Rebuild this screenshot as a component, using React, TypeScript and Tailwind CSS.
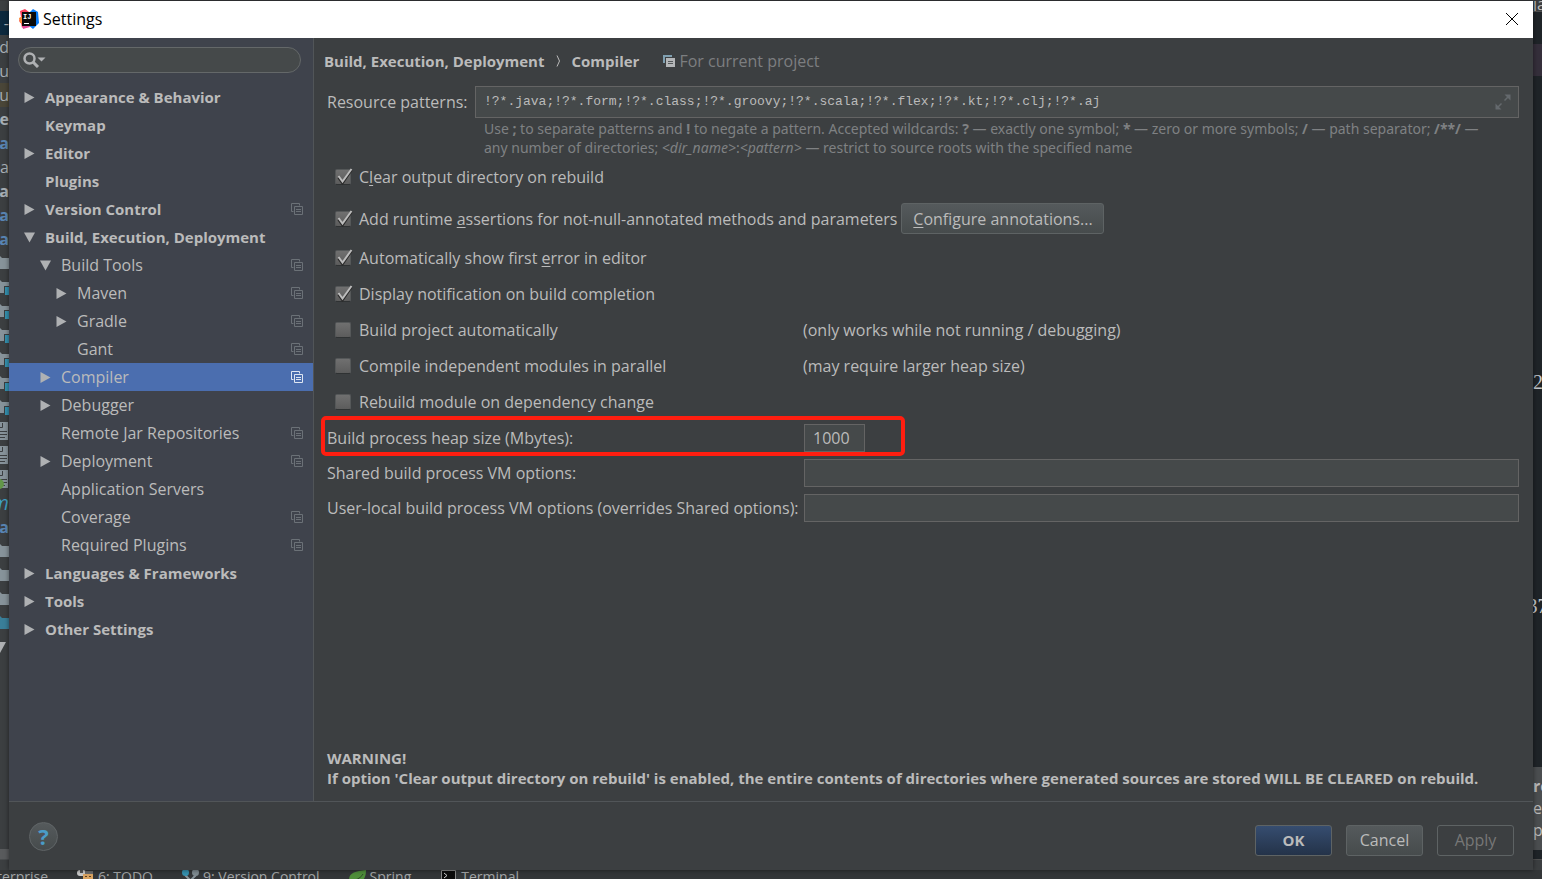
import { useState } from "react";
import type { ReactNode } from "react";

type TreeItem = {
  label: string;
  level: 0 | 1 | 2;
  arrow?: "right" | "down";
  project?: boolean;
};

const TREE: TreeItem[] = [
  { label: "Appearance & Behavior", level: 0, arrow: "right" },
  { label: "Keymap", level: 0 },
  { label: "Editor", level: 0, arrow: "right" },
  { label: "Plugins", level: 0 },
  { label: "Version Control", level: 0, arrow: "right", project: true },
  { label: "Build, Execution, Deployment", level: 0, arrow: "down" },
  { label: "Build Tools", level: 1, arrow: "down", project: true },
  { label: "Maven", level: 2, arrow: "right", project: true },
  { label: "Gradle", level: 2, arrow: "right", project: true },
  { label: "Gant", level: 2, project: true },
  { label: "Compiler", level: 1, arrow: "right", project: true },
  { label: "Debugger", level: 1, arrow: "right" },
  { label: "Remote Jar Repositories", level: 1, project: true },
  { label: "Deployment", level: 1, arrow: "right", project: true },
  { label: "Application Servers", level: 1 },
  { label: "Coverage", level: 1, project: true },
  { label: "Required Plugins", level: 1, project: true },
  { label: "Languages & Frameworks", level: 0, arrow: "right" },
  { label: "Tools", level: 0, arrow: "right" },
  { label: "Other Settings", level: 0, arrow: "right" },
];

const INDENT = ["pl-[15px]", "pl-[31px]", "pl-[47px]"];

function Arrow({ dir }: { dir?: "right" | "down" }) {
  return (
    <svg viewBox="0 0 11 11" className="h-[11px] w-[11px] shrink-0 fill-[#afb1b3]" aria-hidden="true">
      {dir === "right" && <path d="M0.5 0L10.5 5.5L0.5 11Z" />}
      {dir === "down" && <path d="M0 0.5H11L5.5 10.5Z" />}
    </svg>
  );
}

function ProjectIcon({ active }: { active?: boolean }) {
  return (
    <svg
      viewBox="0 0 12 12"
      fill="none"
      className={active ? "h-3 w-3 text-[#dfe6f2]" : "h-3 w-3 text-[#6b7177]"}
      stroke="currentColor"
      aria-hidden="true"
    >
      <path d="M2.5 8.5H0.5V0.5H8.5V2.5" />
      <path d="M3.5 3.5H11.5V11.5H3.5ZM5 6.5H10M5 8.5H10" />
    </svg>
  );
}

function ProjectSolidIcon() {
  return (
    <svg viewBox="0 0 12 12" className="h-3 w-3 shrink-0" aria-hidden="true">
      <path d="M0 0H9V2H2V8H0Z" fill="#7f9fb0" />
      <path d="M2 2H3V9H2Z" fill="#3c3f41" />
      <path d="M3 3H12V12H3Z" fill="#b4b6b8" />
      <path d="M5 6.5H10M5 8.5H10" stroke="#54585a" />
    </svg>
  );
}

function AppLogo() {
  return (
    <svg viewBox="0 0 20 20" className="h-5 w-5" aria-hidden="true">
      <path d="M1 2L6 0L10 3L6 16L3 19L2 14L0 12L2 8Z" fill="#f83f5e" />
      <path d="M0 9L4 7L5 15L1 14Z" fill="#fc8a3a" />
      <path d="M10 4L14 0L19 3L20 14L14 20L9 16Z" fill="#087cfa" />
      <path d="M3 15L10 15L11 18L4 20Z" fill="#e14b9b" />
      <rect x="3" y="3" width="14" height="14" fill="#0b0b0b" />
      <text x="4" y="10" fontSize="7" fontWeight="700" fill="#fff" fontFamily="Liberation Mono, monospace">IJ</text>
      <rect x="5" y="14" width="5" height="1" fill="#fff" />
    </svg>
  );
}

function Check({ id, checked: initial, children }: { id: string; checked?: boolean; children: ReactNode }) {
  const [checked, setChecked] = useState(!!initial);
  return (
    <span className="flex items-center gap-2 pl-2">
      <span className="relative flex h-4 w-4">
        <input
          id={id}
          type="checkbox"
          checked={checked}
          onChange={() => setChecked(!checked)}
          className="h-4 w-4 appearance-none rounded-xs border border-[#555859] border-b-[#2f3233] bg-linear-to-b from-[#707070] to-[#5c5c5c]"
        />
        {checked && (
          <svg viewBox="0 0 18 18" className="pointer-events-none absolute -top-px left-0 h-[18px] w-[18px]" fill="none" aria-hidden="true">
            <path d="M3.5 9.5L7.5 15L16.5 2" stroke="#2b2b2b" strokeWidth="2.5" />
            <path d="M3.5 8L7.5 13.5L16.5 1" stroke="#bcbcbc" strokeWidth="2" />
          </svg>
        )}
      </span>
      <label htmlFor={id}>{children}</label>
    </span>
  );
}

const FIELD = "border border-[#646464] bg-[#45494a] text-[#bbbbbb] outline-none";
const BUTTON = "h-[31px] rounded-[3px] border border-[#5e6364]";

function Folder({ fill, badge }: { fill: string; badge?: boolean }) {
  return (
    <svg viewBox="0 0 9 24" className="h-6 w-[9px]" aria-hidden="true">
      <path d="M0 5L2 7H9V18H0Z" fill={fill} />
      {badge && <path d="M4 11H9V20H4Z" fill="#3c3f41" />}
      {badge && <path d="M5 12H9V20H5Z" fill="#3592b0" />}
    </svg>
  );
}

function FileGlyph({ dot }: { dot?: boolean }) {
  return (
    <svg viewBox="0 0 9 24" className="h-6 w-[9px]" aria-hidden="true">
      <path d="M0 3H8V21H0Z" fill="#87939a" />
      <path d="M0 8.5H2.5V4M0 12.5H7M0 15.5H7M0 18.5H5" stroke="#3c3f41" fill="none" />
      {dot && <circle cx="-1" cy="17" r="5" fill="#629749" />}
    </svg>
  );
}

function Stub({ children, className }: { children: ReactNode; className: string }) {
  return <div className={`flex h-6 items-center justify-end overflow-hidden whitespace-nowrap ${className}`}>{children}</div>;
}

function LeftStrip() {
  return (
    <div className="flex flex-col overflow-hidden pt-[10px] text-[16px] leading-6 text-[#a9b0b5]" aria-hidden="true">
      <Stub className="bg-[#0d293e]">-</Stub>
      <Stub className="">d</Stub>
      <Stub className="">ou</Stub>
      <Stub className="bg-[#4a4638]">ou</Stub>
      <Stub className="font-bold">e</Stub>
      <Stub className="font-bold text-[#5a86b4]">ta</Stub>
      <Stub className="">a</Stub>
      <Stub className="font-bold">ta</Stub>
      <Stub className="font-bold text-[#5a86b4]">ta</Stub>
      <Stub className="font-bold text-[#5a86b4]">ta</Stub>
      <Folder fill="#87939a" />
      {[0, 1, 2, 3, 4, 5].map((n) => (
        <Folder key={n} fill="#87939a" badge />
      ))}
      <FileGlyph />
      <FileGlyph />
      <FileGlyph dot />
      <Stub className="text-[20px] text-[#3f9fc4] italic">m</Stub>
      <Stub className="font-bold text-[#5a86b4]">ta</Stub>
      <Folder fill="#87939a" />
      <Folder fill="#87939a" />
      <Folder fill="#87939a" />
      <Folder fill="#3a7f99" />
      <svg viewBox="0 0 9 24" className="h-6 w-[9px]">
        <path d="M-6 7H6L0 18Z" fill="#afb1b3" />
      </svg>
      <div className="mt-auto h-[11px] border-b border-[#4a4d4f] bg-[#595b5d]" />
      <div className="h-[10px] shrink-0" />
    </div>
  );
}

function RightStrip() {
  return (
    <div className="flex flex-col overflow-hidden bg-[#1f2428] whitespace-nowrap" aria-hidden="true">
      <div className="h-[11px] shrink-0 overflow-hidden border-b border-[#505050] bg-[#3c3f41] text-[16px] leading-[6px] text-[#bbbbbb]">ja</div>
      <div className="h-8 shrink-0" />
      <div className="h-8 shrink-0 bg-[#352f3b]" />
      <div className="flex grow flex-col pt-[294px] font-['Liberation_Serif',serif] text-[20px] leading-6 text-[#c3c9ce]">
        <span className="h-6">2</span>
        <span className="mt-[200px] flex h-6 w-[9px] justify-center">37</span>
      </div>
      <div className="flex h-[83px] shrink-0 flex-col bg-[#4b4e50] pt-2 text-[16px] leading-[22px] text-[#bbbbbb]">
        <b>ro</b>
        <span>e</span>
        <span>p</span>
      </div>
      <div className="h-[10px] shrink-0 border-b border-[#515151]" />
      <div className="h-[10px] shrink-0 bg-[#3c3f41]" />
    </div>
  );
}

function StatusStrip() {
  return (
    <div className="col-span-3 flex h-[9px] items-start overflow-hidden bg-[#333638] text-[14px] leading-[14px] whitespace-nowrap text-[#a4a7a9]">
      <span className="flex w-12 justify-end">Enterprise</span>
      <span className="flex gap-1 pl-[29px]">
        <svg viewBox="0 0 17 10" className="h-[10px] w-[17px]" aria-hidden="true">
          <rect x="0" y="0" width="9" height="6" rx="3" fill="#c9c9c9" />
          <path d="M3 0H6V3H3Z" fill="#555" />
          <path d="M6 4H16V10H6Z" fill="#d9a361" />
          <path d="M8 1H16V4H8Z" fill="#6b6b6b" />
          <path d="M8 6H10V7H8ZM12 6H14V7H12Z" fill="#5a4022" />
        </svg>
        6: TODO
      </span>
      <span className="flex gap-1 pl-[29px]">
        <svg viewBox="0 0 17 10" className="h-[10px] w-[17px]" aria-hidden="true">
          <path d="M3 5L8 10M14 5L9 10" stroke="#87939a" strokeWidth="2" />
          <circle cx="3.5" cy="2.5" r="3.5" fill="#3592b0" />
          <circle cx="13.5" cy="2.5" r="3.5" fill="#7f8b91" />
        </svg>
        9: Version Control
      </span>
      <span className="flex gap-1 pl-[29px]">
        <svg viewBox="0 0 17 10" className="h-[10px] w-[17px]" aria-hidden="true">
          <path d="M0 10C0 3 6 1 17 0C17 5 16 8 14 10Z" fill="#4f8f3a" />
          <path d="M6 10C10 9 13 6 14 4" stroke="#2f4a29" fill="none" />
        </svg>
        Spring
      </span>
      <span className="flex gap-1 pl-[29px]">
        <svg viewBox="0 0 17 10" className="h-[10px] w-[17px]" aria-hidden="true">
          <path d="M1.5 10V0.5H15.5V10" fill="#0c0c0c" stroke="#8a8a8a" />
          <path d="M4 3L7 5.5L4 8" stroke="#d0d0d0" fill="none" />
        </svg>
        Terminal
      </span>
    </div>
  );
}

export default function App() {
  const [selected, setSelected] = useState("Compiler");
  return (
    <div className="grid min-h-screen grid-cols-[9px_minmax(0,1fr)_9px] grid-rows-[1px_1fr_9px] bg-[#3c3f41] font-['Open_Sans','Noto_Sans',sans-serif] text-[#bbbbbb]">
      <div className="col-span-3 bg-[#37393b]" />
      <LeftStrip />
      <section className="z-10 flex flex-col bg-[#3c3f41] shadow-[0_0_5px_rgba(0,0,0,0.5)]" aria-label="Settings">
        <header className="flex h-[37px] shrink-0 items-center bg-white pr-[15px] pb-0.5 pl-[10px] text-black">
          <AppLogo />
          <h1 className="grow pl-1 text-[16px] leading-5">Settings</h1>
          <button type="button" aria-label="Close" className="h-3 w-3">
            <svg viewBox="0 0 12 12" className="h-3 w-3" stroke="#000" aria-hidden="true">
              <path d="M0 0L12 12M12 0L0 12" />
            </svg>
          </button>
        </header>

        <div className="flex grow">
          <nav className="w-[305px] shrink-0 border-r border-[#515558] bg-[#3f434c] pt-[9px]" aria-label="Settings categories">
            <label className="mr-3 ml-[9px] flex h-[26px] items-center gap-px rounded-full border border-[#646869] bg-[#45494a] pl-1">
              <svg viewBox="0 0 23 16" className="h-4 w-[23px] shrink-0" fill="none" aria-hidden="true">
                <circle cx="6.5" cy="6.5" r="5" stroke="#afb1b3" strokeWidth="2.5" />
                <path d="M10 10L15 15" stroke="#afb1b3" strokeWidth="3" />
                <path d="M14.5 5.5H22.5L18.5 9.5Z" fill="#afb1b3" />
              </svg>
              <input type="text" aria-label="Search settings" className="mr-3 min-w-0 grow bg-transparent text-[15px] outline-none" />
            </label>
            <ul className="pt-[10px]">
              {TREE.map((item) => {
                const active = item.label === selected;
                return (
                  <li key={item.label}>
                    <button
                      type="button"
                      onClick={() => setSelected(item.label)}
                      className={`flex h-7 w-full items-center gap-[10px] pr-[10px] text-left whitespace-nowrap ${INDENT[item.level]} ${active ? "bg-[#4b6eaf]" : ""}`}
                    >
                      <Arrow dir={item.arrow} />
                      <span className={item.level === 0 ? "grow text-[15px] font-bold" : "grow text-[16px]"}>{item.label}</span>
                      {item.project && <ProjectIcon active={active} />}
                    </button>
                  </li>
                );
              })}
            </ul>
          </nav>

          <main className="flex min-w-0 grow flex-col pr-[14px] pl-[13px] text-[16px] leading-5">
            <div className="-ml-[3px] flex h-[46px] items-center text-[15px] font-bold">
              <span>Build, Execution, Deployment</span>
              <svg viewBox="0 0 5 12" className="mx-[11px] h-3 w-[5px]" fill="none" stroke="#bbbbbb" aria-hidden="true">
                <path d="M1 0.5L3.5 6L1 11.5" />
              </svg>
              <h2>Compiler</h2>
              <span className="flex items-center gap-1 pl-6 text-[16px] font-normal text-[#7c7e80]">
                <ProjectSolidIcon />
                For current project
              </span>
            </div>

            <div className="mt-[2px] flex items-center">
              <label htmlFor="patterns" className="w-[148px] shrink-0">Resource patterns:</label>
              <div className={`flex h-8 min-w-0 grow items-center pr-[7px] pl-2 ${FIELD}`}>
                <input
                  id="patterns"
                  type="text"
                  defaultValue="!?*.java;!?*.form;!?*.class;!?*.groovy;!?*.scala;!?*.flex;!?*.kt;!?*.clj;!?*.aj"
                  className="min-w-0 grow bg-transparent font-['Liberation_Mono',monospace] text-[13px] outline-none"
                />
                <button type="button" aria-label="Expand field">
                  <svg viewBox="0 0 16 16" className="h-4 w-4" fill="#64696d" stroke="#64696d" strokeWidth="1.5" aria-hidden="true">
                    <path d="M9.5 6.5L13 3M2.5 13.5L6.5 9.5" />
                    <path d="M9.5 0.5H15.5V6.5ZM0.5 9.5V15.5H6.5Z" stroke="none" />
                  </svg>
                </button>
              </div>
            </div>

            <p className="mt-px pr-5 pl-[157px] font-['Noto_Sans',sans-serif] text-[14px] leading-[19px] text-[#7f8183]">
              Use <b>;</b> to separate patterns and <b>!</b> to negate a pattern. Accepted wildcards: <b>?</b> — exactly one symbol; <b>*</b> — zero
              or more symbols; <b>/</b> — path separator; <b>/**/</b> — any number of directories; <i>&lt;dir_name&gt;</i>:<i>&lt;pattern&gt;</i> —
              restrict to source roots with the specified name
            </p>

            <div className="flex h-10 items-center">
              <Check id="clear" checked>
                C<u className="underline-offset-2">l</u>ear output directory on rebuild
              </Check>
            </div>
            <div className="flex h-[43px] items-center gap-1">
              <Check id="assertions" checked>
                Add runtime <u className="underline-offset-2">a</u>ssertions for not-null-annotated methods and parameters
              </Check>
              <button type="button" className={`${BUTTON} w-[203px] bg-linear-to-b from-[#555a5c] to-[#464b4c] whitespace-nowrap`}>
                <u className="underline-offset-2">C</u>onfigure annotations...
              </button>
            </div>
            <div className="flex h-9 items-center">
              <Check id="first-error" checked>
                Automatically show first <u className="underline-offset-2">e</u>rror in editor
              </Check>
            </div>
            <div className="flex h-9 items-center">
              <Check id="notify" checked>Display notification on build completion</Check>
            </div>
            <div className="grid h-9 grid-cols-[476px_minmax(0,1fr)] items-center">
              <Check id="auto-build">Build project automatically</Check>
              <span>(only works while not running / debugging)</span>
            </div>
            <div className="grid h-9 grid-cols-[476px_minmax(0,1fr)] items-center">
              <Check id="parallel">Compile independent modules in parallel</Check>
              <span>(may require larger heap size)</span>
            </div>
            <div className="flex h-9 items-center">
              <Check id="rebuild-dependency">Rebuild module on dependency change</Check>
            </div>

            <div className="relative grid h-[35px] grid-cols-[477px_minmax(0,1fr)] items-center whitespace-nowrap">
              <label htmlFor="heap">Build process heap size (Mbytes):</label>
              <input id="heap" type="text" defaultValue="1000" className={`h-7 w-[61px] px-2 ${FIELD}`} />
              <span className="pointer-events-none absolute -top-1 -bottom-px -left-[6px] w-[584px] rounded-[5px] border-4 border-[#ff1e10]" />
            </div>
            <div className="grid h-[35px] grid-cols-[477px_minmax(0,1fr)] items-center whitespace-nowrap">
              <label htmlFor="shared-vm">Shared build process VM options:</label>
              <input id="shared-vm" type="text" className={`h-7 px-2 ${FIELD}`} />
            </div>
            <div className="grid h-[35px] grid-cols-[477px_minmax(0,1fr)] items-center whitespace-nowrap">
              <label htmlFor="local-vm">User-local build process VM options (overrides Shared options):</label>
              <input id="local-vm" type="text" className={`h-7 px-2 ${FIELD}`} />
            </div>

            <p className="mt-auto pb-[13px] text-[15px] font-bold">
              WARNING!
              <br />
              If option 'Clear output directory on rebuild' is enabled, the entire contents of directories where generated sources are stored
              WILL BE CLEARED on rebuild.
            </p>
          </main>
        </div>

        <footer className="flex h-[69px] shrink-0 items-center gap-[14px] border-t border-[#515558] pr-[19px] pl-5 text-[16px]">
          <button
            type="button"
            aria-label="Help"
            className="mr-auto h-[29px] w-[29px] rounded-full border border-[#606567] bg-linear-to-b from-[#555a5c] to-[#464b4c] text-[22px] leading-6 font-bold text-[#4a9cc7]"
          >
            ?
          </button>
          <button type="button" className={`${BUTTON} mt-2 w-[77px] bg-linear-to-b from-[#364d70] to-[#243349] text-[15px] font-bold`}>OK</button>
          <button type="button" className={`${BUTTON} mt-2 w-[77px] bg-linear-to-b from-[#555a5c] to-[#464b4c]`}>Cancel</button>
          <button type="button" disabled className={`${BUTTON} mt-2 w-[77px] text-[#777777]`}>Apply</button>
        </footer>
      </section>
      <RightStrip />
      <StatusStrip />
    </div>
  );
}
